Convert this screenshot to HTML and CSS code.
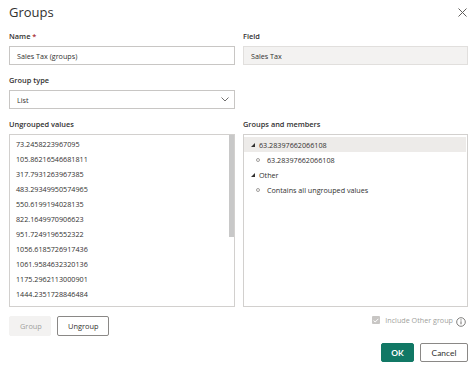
FILE: index.html
```html
<!DOCTYPE html>
<html lang="en">

<head>
    <meta charset="UTF-8">
    <meta name="viewport" content="width=device-width, initial-scale=1.0">
    <title>Groups</title>
    <link rel="stylesheet" href="styles.css">
</head>

<body>

    <div class="dialog">

        <div class="header">
            <h1 class="title">Groups</h1>
            <button class="close" aria-label="Close">
                <svg width="9" height="9" viewBox="0 0 9 9">
                    <path d="M0.5 0.5 L8.5 8.5 M8.5 0.5 L0.5 8.5" stroke="#605e5c" stroke-width="1" fill="none"/>
                </svg>
            </button>
        </div>

        <div class="form-grid">
            <div class="field">
                <label class="label">Name <span class="required">*</span></label>
                <div class="input">Sales Tax (groups)</div>
            </div>
            <div class="field">
                <label class="label">Field</label>
                <div class="input readonly">Sales Tax</div>
            </div>

            <div class="field">
                <label class="label">Group type</label>
                <div class="input select">
                    <span>List</span>
                    <svg width="8" height="5" viewBox="0 0 8 5">
                        <path d="M0.5 0.5 L4 4 L7.5 0.5" stroke="#605e5c" stroke-width="0.9" fill="none"/>
                    </svg>
                </div>
            </div>
            <div></div>

            <div class="field">
                <label class="label">Ungrouped values</label>
                <div class="listbox">
                    <ul class="values">
                        <li>73.2458223967095</li>
                        <li>105.86216546681811</li>
                        <li>317.7931263967385</li>
                        <li>483.29349950574965</li>
                        <li>550.6199194028135</li>
                        <li>822.1649970906623</li>
                        <li>951.7249196552322</li>
                        <li>1056.6185726917436</li>
                        <li>1061.9584632320136</li>
                        <li>1175.2962113000901</li>
                        <li>1444.2351728846484</li>
                    </ul>
                    <div class="scrollbar">
                        <div class="thumb"></div>
                    </div>
                </div>
            </div>
            <div class="field">
                <label class="label">Groups and members</label>
                <div class="listbox tree">
                    <div class="node selected">
                        <svg class="caret" width="4" height="4" viewBox="0 0 4 4"><path d="M4 0 L4 4 L0 4 Z" fill="#323130"/></svg>
                        <span>63.28397662066108</span>
                    </div>
                    <div class="node child">
                        <span class="dot"></span>
                        <span>63.28397662066108</span>
                    </div>
                    <div class="node">
                        <svg class="caret" width="4" height="4" viewBox="0 0 4 4"><path d="M4 0 L4 4 L0 4 Z" fill="#323130"/></svg>
                        <span>Other</span>
                    </div>
                    <div class="node child">
                        <span class="dot"></span>
                        <span>Contains all ungrouped values</span>
                    </div>
                </div>
            </div>
        </div>

        <div class="footer-row">
            <div class="group-buttons">
                <button class="btn disabled">Group</button>
                <button class="btn">Ungroup</button>
            </div>
            <div class="include">
                <span class="checkbox">
                    <svg width="6" height="5" viewBox="0 0 6 5"><path d="M0.6 2.6 L2.2 4 L5.4 0.8" stroke="#fff" stroke-width="1" fill="none"/></svg>
                </span>
                <span class="include-text">Include Other group</span>
                <svg class="info" width="10" height="10" viewBox="0 0 10 10">
                    <circle cx="5" cy="5" r="4.3" stroke="#605e5c" stroke-width="0.8" fill="none"/>
                    <path d="M5 4.3 L5 7.3" stroke="#605e5c" stroke-width="0.9"/>
                    <circle cx="5" cy="2.9" r="0.55" fill="#605e5c"/>
                </svg>
            </div>
        </div>

        <div class="actions">
            <button class="btn primary">OK</button>
            <button class="btn cancel">Cancel</button>
        </div>

    </div>

</body>

</html>
```

FILE: styles.css
```css
body {
    margin: 0;
    background-color: #ffffff;
    font-family: "Open Sans", "Noto Sans", sans-serif;
    color: #323130;
}

.dialog {
    width: 474px;
    height: 366px;
    box-sizing: border-box;
    padding: 0 6px 0 9px;
}

.header {
    display: flex;
    justify-content: space-between;
    align-items: center;
    height: 24px;
}

.title {
    margin: 0;
    font-size: 13px;
    font-weight: 400;
    line-height: 24px;
}

.close {
    display: flex;
    padding: 0;
    margin: 0 1px 0 0;
    border: none;
    background: none;
}

.form-grid {
    display: grid;
    grid-template-columns: 226px 225px;
    column-gap: 8px;
    row-gap: 9px;
    margin-top: 6px;
}

.field {
    display: flex;
    flex-direction: column;
}

.label {
    height: 12px;
    margin-bottom: 4px;
    font-size: 7.4px;
    font-weight: 600;
    line-height: 12px;
}

.required {
    color: #a4262c;
}

.input {
    display: flex;
    align-items: center;
    height: 19px;
    box-sizing: border-box;
    padding: 0 7px;
    border: 1px solid #c8c6c4;
    font-size: 7.2px;
}

.readonly {
    background-color: #f3f2f1;
    border-color: #e1dfdd;
}

.select {
    justify-content: space-between;
    padding-right: 5px;
}

.listbox {
    display: flex;
    height: 173px;
    box-sizing: border-box;
    border: 1px solid #d2d0ce;
}

.values {
    flex: 1;
    margin: 0;
    padding: 2px 0 0 6px;
    list-style: none;
    font-size: 7.2px;
}

.values li {
    height: 15px;
    line-height: 15px;
}

.scrollbar {
    width: 5px;
}

.thumb {
    height: 102px;
    background-color: #c8c8c8;
}

.tree {
    flex-direction: column;
    padding: 2px 1px 0 0;
    font-size: 7.2px;
}

.node {
    display: flex;
    align-items: center;
    gap: 4px;
    height: 15px;
    padding-left: 7px;
}

.node.selected {
    background-color: #edebe9;
}

.caret {
    flex-shrink: 0;
}

.node.child {
    padding-left: 12px;
    gap: 7px;
}

.dot {
    width: 2px;
    height: 2px;
    border: 0.7px solid #a19f9d;
    border-radius: 50%;
}

.footer-row {
    display: flex;
    justify-content: space-between;
    margin-top: 9px;
}

.group-buttons {
    display: flex;
    gap: 6px;
}

.btn {
    height: 20px;
    box-sizing: border-box;
    padding: 0 10px;
    border: 1px solid #8a8886;
    border-radius: 2px;
    background-color: #ffffff;
    color: #323130;
    font-family: "Open Sans", "Noto Sans", sans-serif;
    font-size: 7.4px;
}

.btn.disabled {
    width: 42px;
    border-color: #f3f2f1;
    background-color: #f3f2f1;
    color: #a19f9d;
}

.include {
    display: flex;
    align-items: center;
    gap: 5px;
    height: 10px;
    margin-top: -1px;
    margin-right: 2px;
    font-size: 7.2px;
    color: #a19f9d;
}

.checkbox {
    display: flex;
    align-items: center;
    justify-content: center;
    width: 8px;
    height: 8px;
    background-color: #c8c6c4;
    border-radius: 1px;
}

.include-text {
    margin-right: -2px;
}

.info {
    margin-top: 4px;
}

.actions {
    display: flex;
    justify-content: flex-end;
    gap: 6px;
    margin-top: 7px;
}

.actions .btn {
    height: 19px;
    font-family: "Lato", sans-serif;
    font-size: 8.4px;
}

.btn.primary {
    width: 33px;
    padding: 0;
    border-color: #117865;
    background-color: #117865;
    color: #ffffff;
    font-weight: 700;
}

.btn.cancel {
    width: 48px;
    padding: 0;
}
```
